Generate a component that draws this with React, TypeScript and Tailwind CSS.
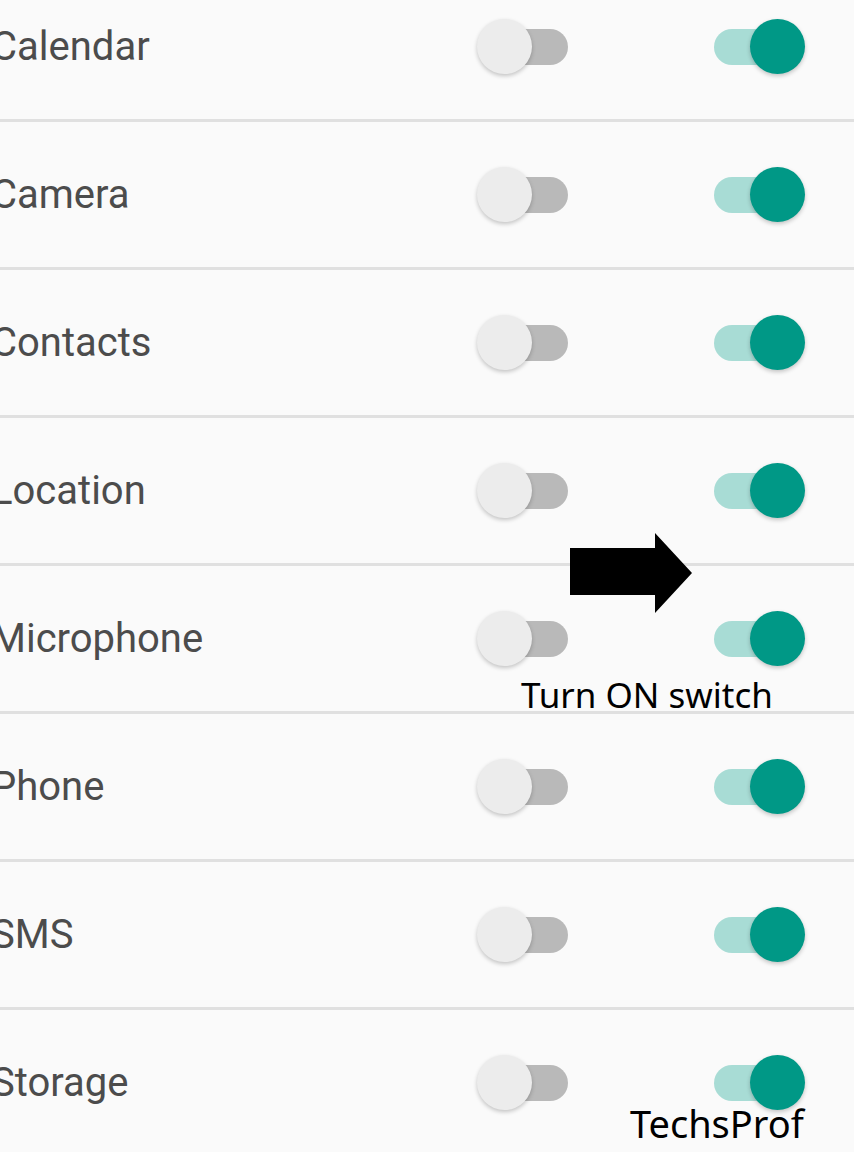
import React from "react";

const permissions = ["Calendar", "Camera", "Contacts", "Location", "Microphone", "Phone", "SMS", "Storage"];

// Material-style switch. Thumb sits over the track, so it's placed absolutely inside.
function Toggle({ on }: { on: boolean }) {
  return (
    <div className="relative h-[55px] w-[91px] shrink-0">
      <div
        className={
          on
            ? "absolute left-0 right-[13px] top-[10px] h-[36px] rounded-full bg-[#a8dcd5]"
            : "absolute left-[13px] right-0 top-[10px] h-[36px] rounded-full bg-[#b9b9b9]"
        }
      />
      <div
        className={
          on
            ? "absolute right-0 top-0 size-[55px] rounded-full bg-[#009886] shadow-[0_2px_4px_rgba(0,0,0,0.22)]"
            : "absolute left-0 top-0 size-[55px] rounded-full bg-[#ececec] shadow-[0_2px_4px_rgba(0,0,0,0.22)]"
        }
      />
    </div>
  );
}

function Row({ label, last }: { label: string; last: boolean }) {
  return (
    <div className={last ? "flex h-[145px] items-center" : "flex h-[148px] items-center border-b-[3px] border-[#e0e0e0]"}>
      <div className="w-[477px] shrink-0 pl-0">
        <span className="-ml-[9px] block text-[40px] leading-none text-[#4c4c4c] [font-family:Roboto,'Liberation_Sans',sans-serif]">
          {label}
        </span>
      </div>
      <Toggle on={false} />
      <div className="w-[146px] shrink-0" />
      <Toggle on />
    </div>
  );
}

export default function App() {
  return (
    <div className="relative h-[1152px] w-[854px] overflow-hidden bg-[#fafafa]">
      <div className="-mt-[26px] flex flex-col">
        {permissions.map((p, i) => (
          <Row key={p} label={p} last={i === permissions.length - 1} />
        ))}
      </div>

      {/* annotations laid over the screenshot */}
      <svg className="absolute left-[570px] top-[533px]" width="122" height="80" viewBox="0 0 122 80">
        <polygon points="0,15 85,15 85,0 122,40 85,80 85,62 0,62" fill="#000" />
      </svg>
      <span className="absolute left-[521px] top-[677px] whitespace-nowrap text-[35px] leading-none text-black [font-family:'Noto_Sans',sans-serif]">
        Turn ON switch
      </span>
      <span className="absolute left-[630px] top-[1104px] whitespace-nowrap text-[38px] leading-none text-black [font-family:'Noto_Sans',sans-serif]">
        TechsProf
      </span>
    </div>
  );
}
